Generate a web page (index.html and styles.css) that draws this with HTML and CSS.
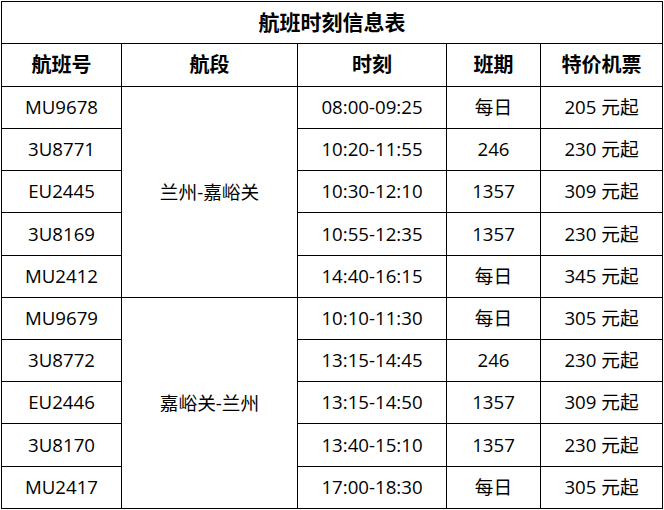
FILE: index.html
```html
<!DOCTYPE html>
<html lang="zh-CN">
<head>
<meta charset="utf-8">
<title>航班时刻信息表</title>
<link rel="stylesheet" href="styles.css">
</head>
<body>
<table class="flights">
  <colgroup>
    <col class="c1"><col class="c2"><col class="c3"><col class="c4"><col class="c5">
  </colgroup>
  <thead>
    <tr class="title-row"><th colspan="5" class="title">航班时刻信息表</th></tr>
    <tr class="head-row"><th>航班号</th><th>航段</th><th>时刻</th><th>班期</th><th>特价机票</th></tr>
  </thead>
  <tbody>
    <tr><td>MU9678</td><td rowspan="5">兰州-嘉峪关</td><td>08:00-09:25</td><td>每日</td><td>205 元起</td></tr>
    <tr><td>3U8771</td><td>10:20-11:55</td><td>246</td><td>230 元起</td></tr>
    <tr><td>EU2445</td><td>10:30-12:10</td><td>1357</td><td>309 元起</td></tr>
    <tr class="tall"><td>3U8169</td><td>10:55-12:35</td><td>1357</td><td>230 元起</td></tr>
    <tr><td>MU2412</td><td>14:40-16:15</td><td>每日</td><td>345 元起</td></tr>
    <tr><td>MU9679</td><td rowspan="5">嘉峪关-兰州</td><td>10:10-11:30</td><td>每日</td><td>305 元起</td></tr>
    <tr><td>3U8772</td><td>13:15-14:45</td><td>246</td><td>230 元起</td></tr>
    <tr><td>EU2446</td><td>13:15-14:50</td><td>1357</td><td>309 元起</td></tr>
    <tr class="tall"><td>3U8170</td><td>13:40-15:10</td><td>1357</td><td>230 元起</td></tr>
    <tr><td>MU2417</td><td>17:00-18:30</td><td>每日</td><td>305 元起</td></tr>
  </tbody>
</table>
</body>
</html>
```
FILE: styles.css
```css
html, body {
  margin: 0;
  padding: 0;
  background: #ffffff;
}
body {
  padding: 1px 0 0 1px;
  font-family: "Open Sans", "Noto Sans CJK SC", sans-serif;
  color: #000000;
}
.flights {
  border-collapse: collapse;
  table-layout: fixed;
  width: 662px;
}
.c1 { width: 120px; }
.c2 { width: 176px; }
.c3 { width: 149px; }
.c4 { width: 94px; }
.c5 { width: 122px; }
.flights th,
.flights td {
  border: 1.5px solid #000000;
  text-align: center;
  vertical-align: middle;
  padding: 0;
  white-space: nowrap;
  line-height: 1;
}
.flights td {
  font-size: 18.67px;
  font-weight: 400;
}
.flights tbody tr { height: 42px; }
.flights tbody tr.tall { height: 43px; }
.title-row { height: 42px; }
.head-row { height: 43px; }
.title {
  font-size: 21px;
  font-weight: 700;
}
.head-row th {
  font-size: 20px;
  font-weight: 700;
}
```
